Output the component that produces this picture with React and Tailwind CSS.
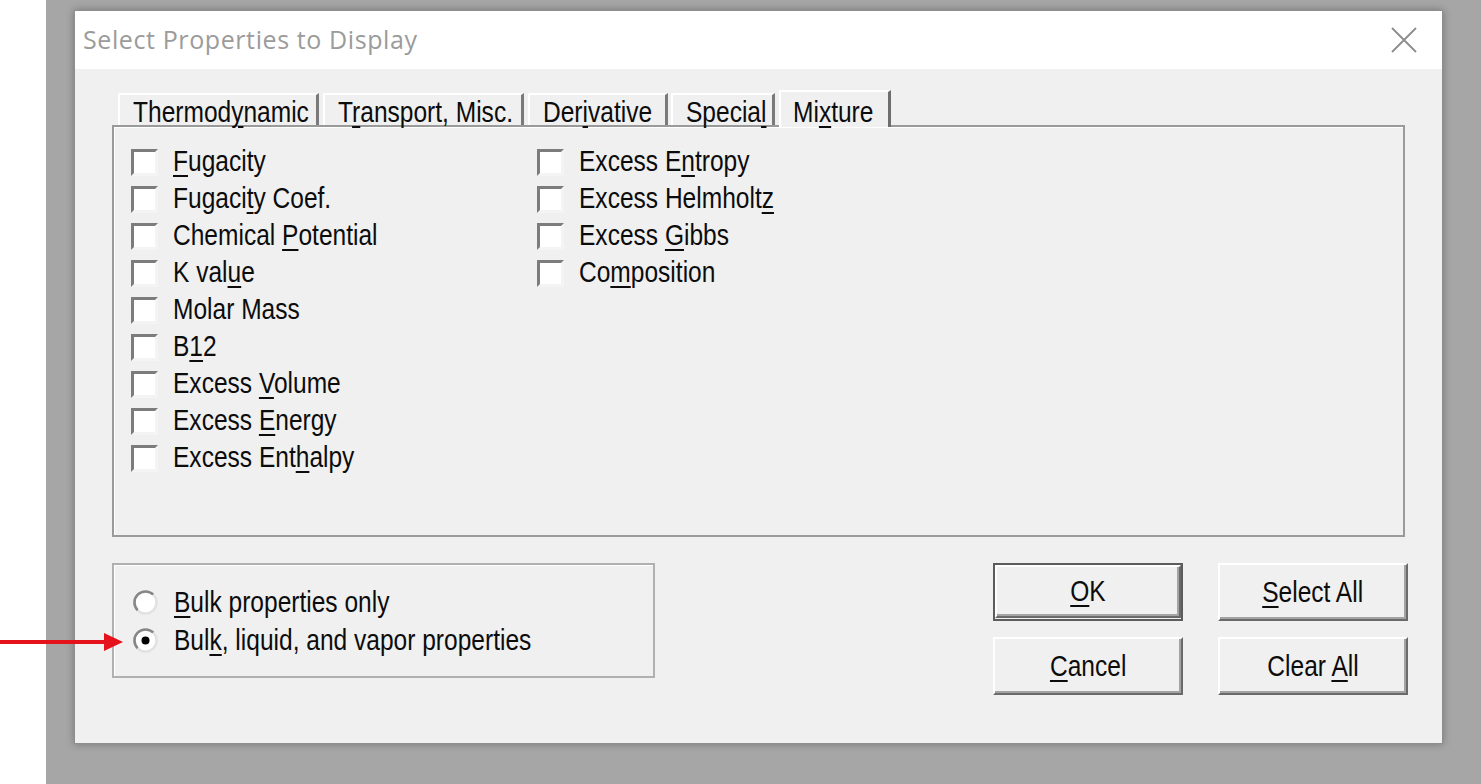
import React from 'react';

// Etiqueta com letra de atalho marcada por "&"
const Label = ({ text }) => {
  const i = text.indexOf('&');
  if (i < 0) return text;
  return (
    <>
      {text.slice(0, i)}
      <span className="underline decoration-2 underline-offset-[4px]">{text[i + 1]}</span>
      {text.slice(i + 2)}
    </>
  );
};

const font = "font-['Liberation_Sans',Arial,sans-serif] text-[29px] leading-[29px] text-[#0c0c0c] whitespace-nowrap";

// texto estreito (a fonte original é mais condensada)
const Narrow = ({ text, center }) => (
  <span className={`inline-block scale-x-[0.846] ${center ? 'origin-center' : 'origin-left'} ${font}`}>
    <Label text={text} />
  </span>
);

const tabs = [
  { label: 'Thermod&ynamic', w: 'w-[201px] ml-[6px]' },
  { label: 'T&ransport, Misc.', w: 'w-[201px] ml-[4px]' },
  { label: 'Der&ivative', w: 'w-[140px] ml-[4px]' },
  { label: 'Specia&l', w: 'w-[104px] ml-[3px]' },
];

const col1 = [
  '&Fugacity',
  'Fugaci&ty Coef.',
  'Chemical &Potential',
  'K val&ue',
  'Molar Mass',
  'B&12',
  'Excess &Volume',
  'Excess &Energy',
  'Excess Ent&halpy',
];

const col2 = ['Excess E&ntropy', 'Excess Helmholt&z', 'Excess &Gibbs', 'Co&mposition'];

const Checkbox = ({ label }) => (
  <div className="flex items-start h-[37px]">
    <div className="mt-[6px] w-[27px] h-[27px] bg-white border-[3px] border-t-[#7c7c7c] border-l-[#7c7c7c] border-r-[#f4f4f4] border-b-[#f4f4f4]" />
    <div className="ml-[15px] mt-[4px]">
      <Narrow text={label} />
    </div>
  </div>
);

const Radio = ({ label, checked }) => (
  <div className="flex items-start h-[38px]">
    <svg width="25" height="25" viewBox="0 0 25 25" className="mt-[6px]">
      <circle cx="12.5" cy="12.5" r="11" fill="#fff" />
      <path d="M4.7 20.3 A11 11 0 0 1 20.3 4.7" stroke="#868686" strokeWidth="2.6" fill="none" />
      <path d="M20.3 4.7 A11 11 0 0 1 4.7 20.3" stroke="#e2e2e2" strokeWidth="2.6" fill="none" />
      {checked && <circle cx="12.5" cy="12.5" r="4" fill="#000" />}
    </svg>
    <div className="ml-[16px] mt-[4px]">
      <Narrow text={label} />
    </div>
  </div>
);

const Button = ({ label, isDefault }) => (
  <div className={isDefault ? 'border-2 border-[#5c5c5c]' : ''}>
    <button
      className={`${isDefault ? 'w-[186px] h-[53px]' : 'w-[190px] h-[58px]'} flex items-center justify-center bg-[#f0f0f0] border-2 border-t-white border-l-white border-r-[#6a6a6a] border-b-[#6a6a6a] shadow-[inset_-2px_-2px_0_#a3a3a3]`}
    >
      <Narrow text={label} center />
    </button>
  </div>
);

const App = () => {
  return (
    <div className="relative w-[1481px] h-[784px] overflow-hidden flex bg-white">
      <div className="w-[46px] h-full bg-white" />
      <div className="flex-1 h-full bg-[#a6a6a6] pt-[10px] pl-[28px]">
        <div className="w-[1369px] h-[734px] bg-[#f0f0f0] border border-[#8e8e8e] shadow-[0_0_8px_rgba(0,0,0,0.3)] flex flex-col">
          {/* barra de título */}
          <div className="h-[58px] bg-white flex items-center justify-between pl-[8px] pr-[25px]">
            <span className="font-['Segoe_UI','Open_Sans',sans-serif] text-[25px] tracking-[0.6px] text-[#9b9b9b]">
              Select Properties to Display
            </span>
            <svg width="26" height="26" viewBox="0 0 26 26">
              <path d="M1 1 L25 25 M25 1 L1 25" stroke="#8c8c8c" strokeWidth="1.8" />
            </svg>
          </div>

          <div className="flex-1 pt-[21px] pl-[37px] pr-[37px]">
            {/* abas */}
            <div className="flex items-end h-[35px]">
              {tabs.map((t) => (
                <div
                  key={t.label}
                  className={`${t.w} h-[32px] pl-[13px] pt-[3px] border-t-2 border-l-2 border-t-white border-l-white border-r-[3px] border-r-[#7a7a7a] rounded-tl-[2px]`}
                >
                  <Narrow text={t.label} />
                </div>
              ))}
              <div className="relative z-10 ml-[4px] w-[112px] h-[37px] mb-[-2px] bg-[#f0f0f0] pl-[12px] pt-[6px] border-t-2 border-l-2 border-t-white border-l-white border-r-[3px] border-r-[#6e6e6e] rounded-tl-[2px]">
                <Narrow text="Mi&xture" />
              </div>
            </div>

            {/* painel */}
            <div className="w-[1293px] h-[412px] border-2 border-[#9a9a9a] shadow-[inset_1px_1px_0_#ffffff] pt-[16px] pl-[17px] flex">
              <div className="w-[406px] flex flex-col">
                {col1.map((l) => (
                  <Checkbox key={l} label={l} />
                ))}
              </div>
              <div className="flex flex-col">
                {col2.map((l) => (
                  <Checkbox key={l} label={l} />
                ))}
              </div>
            </div>

            {/* parte inferior */}
            <div className="mt-[26px] flex justify-between mr-[-3px]">
              <div className="w-[543px] h-[115px] border-2 border-[#b0b0b0] shadow-[inset_1px_1px_0_#ffffff] pt-[19px] pl-[19px] flex flex-col">
                <Radio label="&Bulk properties only" />
                <Radio label="Bul&k, liquid, and vapor properties" checked />
              </div>
              <div className="grid grid-cols-[190px_190px] gap-x-[35px] gap-y-[16px]">
                <Button label="&OK" isDefault />
                <Button label="&Select All" />
                <Button label="&Cancel" />
                <Button label="Clear &All" />
              </div>
            </div>
          </div>
        </div>
      </div>

      {/* seta vermelha de destaque */}
      <svg className="absolute left-0 top-[630px]" width="126" height="24" viewBox="0 0 126 24">
        <line x1="0" y1="12" x2="108" y2="12" stroke="#e5111b" strokeWidth="4" />
        <polygon points="104,3 123,12 104,21" fill="#e5111b" />
      </svg>
    </div>
  );
};

export default App;
